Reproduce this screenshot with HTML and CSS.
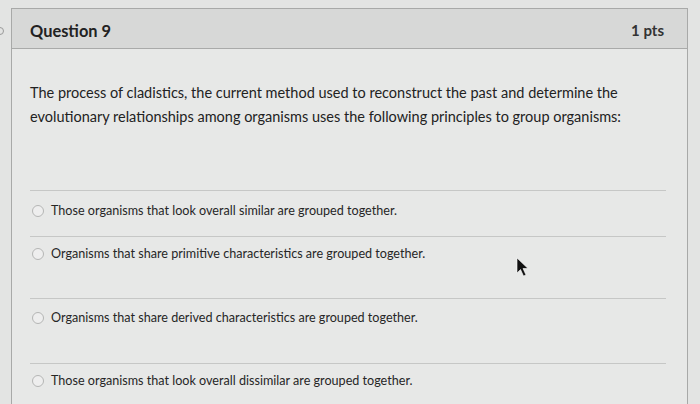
FILE: index.html
```html
<!DOCTYPE html>
<html>
<head>
<meta charset="utf-8">
<link rel="stylesheet" href="styles.css">
</head>
<body>
<div class="page">
  <span class="nav-dot"></span>
  <div class="card">
    <div class="card-header">
      <h2 class="q-title">Question 9</h2>
      <span class="q-pts">1 pts</span>
    </div>
    <div class="card-body">
      <p class="q-text">The process of cladistics, the current method used to reconstruct the past and determine the evolutionary relationships among organisms uses the following principles to group organisms:</p>
      <div class="answers">
        <div class="answer a1"><span class="radio"></span><span class="label">Those organisms that look overall similar are grouped together.</span></div>
        <div class="answer a2"><span class="radio"></span><span class="label">Organisms that share primitive characteristics are grouped together.</span></div>
        <div class="answer a3"><span class="radio"></span><span class="label">Organisms that share derived characteristics are grouped together.</span></div>
        <div class="answer a4"><span class="radio"></span><span class="label">Those organisms that look overall dissimilar are grouped together.</span></div>
      </div>
    </div>
  </div>
  <svg class="cursor" width="14" height="20" viewBox="0 0 14 20"><path d="M1 1 L1 16 L4.5 12.5 L7.5 19 L10 18 L7 11.5 L12 11.5 Z" fill="#111" stroke="#fff" stroke-width="0.6"/></svg>
</div>
</body>
</html>
```
FILE: styles.css
```css
html, body {
  margin: 0;
  padding: 0;
  background: #e3e4e3;
}
.page {
  position: relative;
  width: 700px;
  height: 404px;
  overflow: hidden;
  padding-top: 8px;
  box-sizing: border-box;
  font-family: Lato, "Open Sans", sans-serif;
  color: #2b2b2b;
}
.nav-dot {
  position: absolute;
  left: -4px;
  top: 27px;
  width: 6px;
  height: 6px;
  border: 1px solid #9a9a9a;
  border-radius: 50%;
}
.card {
  margin-left: 11px;
  width: 677px;
  height: 420px;
  border: 1px solid #a8a9a8;
  background: #e7e8e7;
  box-sizing: border-box;
}
.card-header {
  height: 40px;
  background: #d7d8d7;
  border-bottom: 1px solid #a9aaa9;
  display: flex;
  justify-content: space-between;
  align-items: center;
  padding: 0 23px 0 18px;
  box-sizing: border-box;
}
.q-title {
  margin: 0;
  font-size: 16.4px;
  font-weight: 700;
  color: #222;
  padding-top: 4px;
}
.q-pts {
  font-size: 15px;
  font-weight: 700;
  color: #333;
  align-self: flex-start;
  padding-top: 12px;
}
.card-body {
  padding: 32px 0 0 18px;
}
.q-text {
  margin: 0;
  width: 600px;
  font-size: 14.5px;
  line-height: 24px;
  color: #222;
}
.answers {
  margin-top: 61px;
  width: 636px;
}
.answer {
  display: flex;
  align-items: flex-start;
  border-top: 1px solid #c6c7c6;
  box-sizing: border-box;
  font-size: 12.6px;
  color: #262626;
}
.a1 { height: 46px; padding-top: 12px; }
.a2 { height: 62px; padding-top: 9px; }
.a3 { height: 65px; padding-top: 11px; }
.a4 { height: 40px; padding-top: 9px; }
.radio {
  width: 10px;
  height: 10px;
  border: 1px solid #b5b6b5;
  border-radius: 50%;
  background: #eeeeee;
  margin: 2px 7px 0 2px;
  flex: none;
}
.cursor {
  position: absolute;
  left: 516px;
  top: 257px;
}
```
